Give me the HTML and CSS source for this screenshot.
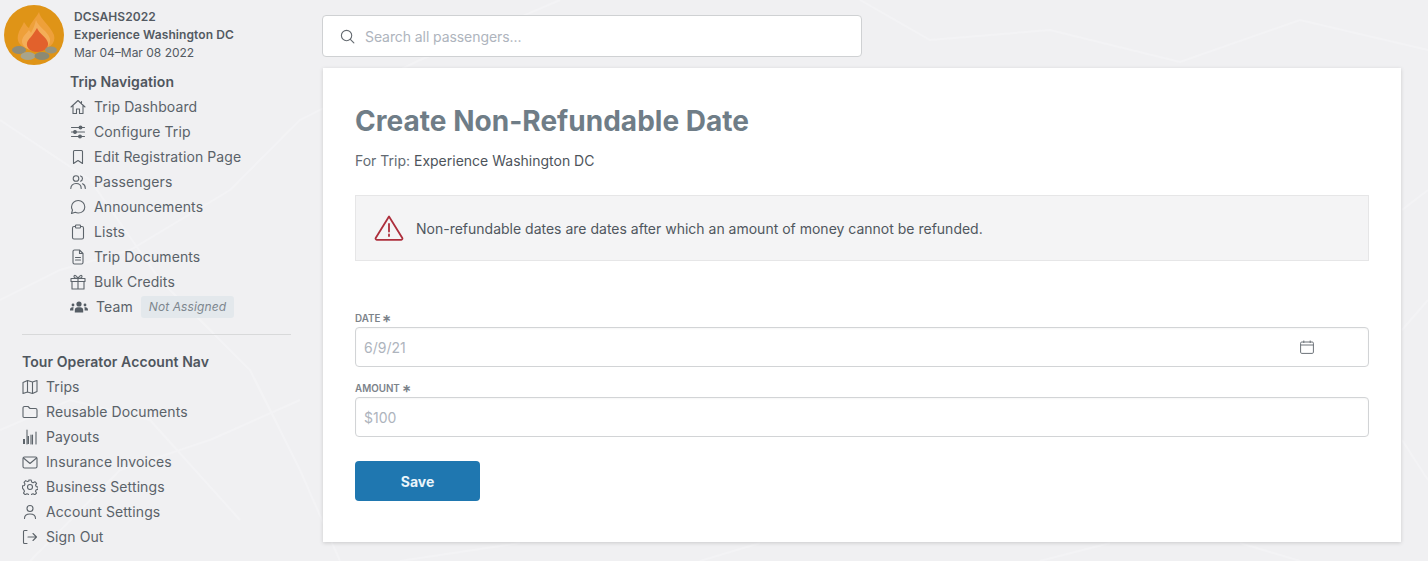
FILE: index.html
```html
<!DOCTYPE html>
<html lang="en">
<head>
<meta charset="utf-8">
<title>Create Non-Refundable Date</title>
<link rel="stylesheet" href="styles.css">
</head>
<body>
<svg class="map" width="1428" height="561" viewBox="0 0 1428 561" fill="none" stroke="#f3f3f5" stroke-width="2" aria-hidden="true">
  <path d="M0 300 60 270 130 250 230 190 300 120 420 60 560 0"/>
  <path d="M0 120 90 180 160 280 250 370 300 470 340 561"/>
  <path d="M860 0 930 40 1050 30 1180 62 1300 20 1428 50"/>
  <path d="M1402 210 1428 190M1402 330 1428 300M1402 440 1428 480"/>
  <path d="M30 561 120 470 210 440 300 400"/>
  <path d="M1040 561 1110 543M1240 543 1300 561"/>
  <path d="M400 561 520 543M700 561 760 543"/>
  <path d="M0 430 70 400 150 420 240 520"/>
</svg>
<div class="app">
  <aside class="sidebar">
    <header class="trip">
      <svg class="avatar" viewBox="0 0 60 60" aria-hidden="true">
        <circle cx="30" cy="30" r="30" fill="#df9417"/>
        <path d="M35 7C36 14 46 20 50 30 52 38 46 45 32 45 20 45 12 39 14 30 15 25 18 22 20 17 22 20 23 22 25 23 27 17 32 13 35 7z" fill="#eea03a"/>
        <path d="M32 15C34 22 44 26 46 34 47 41 40 46 32 46 24 46 17 41 18 35 19 31 22 29 25 25L27 28C29 24 31 20 32 15z" fill="#f4ae58"/>
        <path d="M33 23C35 29 43 32 44 38 45 43 39 47 33 47 27 47 22 43 23 38 24 34 28 32 33 23z" fill="#e2612c"/>
        <ellipse cx="15" cy="45" rx="7" ry="4" fill="#8f8c79"/>
        <ellipse cx="24" cy="51" rx="7.500" ry="4" fill="#a8a48c"/>
        <ellipse cx="38" cy="51" rx="7.500" ry="4" fill="#8b8a74"/>
        <ellipse cx="47" cy="45" rx="6" ry="3.600" fill="#98947c"/>
      </svg>
      <div class="trip-text">
        <div class="trip-strong">DCSAHS2022</div>
        <div class="trip-strong">Experience Washington DC</div>
        <div>Mar 04–Mar 08 2022</div>
      </div>
    </header>

    <nav class="nav nav-trip">
      <h2 class="nav-title">Trip Navigation</h2>
      <a class="nav-item"><svg class="ico" viewBox="0 0 16 16"><path d="M1 8 8 1.500 15 8M3 6.500V14.500h3.500V10h3v4.500H13V6.500M11.500 2.500v2.500"/></svg>Trip Dashboard</a>
      <a class="nav-item"><svg class="ico" viewBox="0 0 16 16"><path d="M1.500 3.500h13M1.500 8h13M1.500 12.500h13"/><circle class="dot" cx="10.500" cy="3.500" r="1.400"/><circle class="dot" cx="5" cy="8" r="1.400"/><circle class="dot" cx="10" cy="12.500" r="1.400"/></svg>Configure Trip</a>
      <a class="nav-item"><svg class="ico" viewBox="0 0 16 16"><path d="M3.500 2.500a1 1 0 0 1 1-1h7a1 1 0 0 1 1 1v12L8 11.500l-4.500 3z"/></svg>Edit Registration Page</a>
      <a class="nav-item"><svg class="ico" viewBox="0 0 16 16"><circle cx="6" cy="4.500" r="2.800"/><path d="M.8 14.500c0-3 2.200-5 5.200-5s5.200 2 5.200 5M10.500 2a2.700 2.700 0 0 1 0 5.200M12.500 9.800c1.700.6 2.800 2.300 2.800 4.700"/></svg>Passengers</a>
      <a class="nav-item"><svg class="ico" viewBox="0 0 16 16"><path d="M2.500 11C1.800 10 1.500 9 1.500 8c0-3.500 3-6.500 6.700-6.500S14.800 4.500 14.800 8 11.900 14 8.200 14c-1.100 0-2-.2-2.900-.7l-3.800 1.200z"/></svg>Announcements</a>
      <a class="nav-item"><svg class="ico" viewBox="0 0 16 16"><path d="M5.500 2.500H4a1.500 1.500 0 0 0-1.500 1.500v9.500A1.500 1.500 0 0 0 4 15h8a1.500 1.500 0 0 0 1.500-1.500V4A1.500 1.500 0 0 0 12 2.500h-1.500"/><rect x="5.500" y="1" width="5" height="3" rx=".8"/></svg>Lists</a>
      <a class="nav-item"><svg class="ico" viewBox="0 0 16 16"><path d="M9.500 1H4.500A1.500 1.500 0 0 0 3 2.500v11A1.500 1.500 0 0 0 4.500 15h7a1.500 1.500 0 0 0 1.500-1.500V4.500zM9.500 1v3.500H13M5.500 8.500h5M5.500 11h5"/></svg>Trip Documents</a>
      <a class="nav-item"><svg class="ico" viewBox="0 0 16 16"><path d="M1 4.500h14v3H1zM2 7.500v7.500h12V7.500M8 4.500V15M8 4.500C6 4.500 4 4 4 2.500S6 .5 8 4.500zM8 4.500c2 0 4-.5 4-2S10 .5 8 4.500z"/></svg>Bulk Credits</a>
      <a class="nav-item nav-team">
        <svg class="ico-team" viewBox="0 0 18 12"><circle cx="9" cy="3" r="2.600"/><path d="M4.800 11.500V9c0-1.800 1.400-2.800 3-2.800h2.400c1.600 0 3 1 3 2.800v2.500z"/><circle cx="3" cy="4" r="1.400"/><circle cx="15" cy="4" r="1.400"/><path d="M0 9c0-1.800 1-2.800 2.400-2.800h1.300C3.200 7 3.400 8 3.400 9.500H0zM18 9c0-1.800-1-2.800-2.400-2.800h-1.300c.5.800.3 1.800.3 3.300H18z"/></svg>
        <span>Team</span><span class="badge">Not Assigned</span>
      </a>
    </nav>

    <hr class="divider">

    <nav class="nav nav-account">
      <h2 class="nav-title">Tour Operator Account Nav</h2>
      <a class="nav-item"><svg class="ico" viewBox="0 0 16 16"><path d="M1 3.500 5.500 1.500 10.500 3 15 1.500V12.500L10.500 14.500 5.500 13 1 14.500zM5.500 1.500V13M10.500 3V14.500"/></svg>Trips</a>
      <a class="nav-item"><svg class="ico" viewBox="0 0 16 16"><path d="M1 4a1.500 1.500 0 0 1 1.500-1.500h3.500L8 4.500h5.500A1.500 1.500 0 0 1 15 6v6.500a1 1 0 0 1-1 1H2a1 1 0 0 1-1-1z"/></svg>Reusable Documents</a>
      <a class="nav-item"><svg class="ico ico-bars" viewBox="0 0 16 16"><path class="fill" d="M1 10h2v5H1zM5.500 7h1.500v8H5.500z"/><path d="M5 1v14M9 6v9M10.500 6v9M14 3v12"/></svg>Payouts</a>
      <a class="nav-item"><svg class="ico" viewBox="0 0 16 16"><rect x="1" y="3" width="14" height="11" rx="1.500"/><path d="M1.500 4 8 9.500 14.500 4"/></svg>Insurance Invoices</a>
      <a class="nav-item"><svg class="ico" viewBox="0 0 16 16"><circle cx="8" cy="8" r="2.500"/><path d="M6.800 1h2.400l.4 2 1.500.7 1.800-1 1.700 1.700-1.100 1.700.7 1.500 1.800.4v2.400l-1.800.4-.7 1.500 1 1.800-1.700 1.600-1.700-1-1.500.6-.4 2H6.800l-.4-2-1.500-.6-1.700 1-1.700-1.600 1-1.800-.7-1.500L.5 9.100V6.900l1.800-.4.7-1.500-1-1.700 1.700-1.700 1.700 1 1.500-.7z"/></svg>Business Settings</a>
      <a class="nav-item"><svg class="ico" viewBox="0 0 16 16"><circle cx="8" cy="4.500" r="3"/><path d="M2.500 14.500c0-2.800 2.400-4.500 5.500-4.500s5.500 1.700 5.500 4.500"/></svg>Account Settings</a>
      <a class="nav-item"><svg class="ico" viewBox="0 0 16 16"><path d="M5 1.500H2.500a1 1 0 0 0-1 1v11a1 1 0 0 0 1 1H5M6 8h8.500M11 4.500 14.500 8 11 11.500"/></svg>Sign Out</a>
    </nav>
  </aside>

  <main class="main">
    <div class="search">
      <svg class="search-ico" viewBox="0 0 16 16"><circle cx="7" cy="7" r="5.500"/><path d="M11 11l3.800 3.800"/></svg>
      <span>Search all passengers...</span>
    </div>
    <section class="card">
      <h1 class="title">Create Non-Refundable Date</h1>
      <p class="subtitle">For Trip: <span class="subtitle-trip">Experience Washington DC</span></p>
      <div class="alert">
        <svg class="alert-ico" viewBox="0 0 30 26"><path d="M15 1.500 1.700 23a1.200 1.200 0 0 0 1 1.800h24.600a1.200 1.200 0 0 0 1-1.800z"/><path d="M15 9v7.500M15 19.500v1.500"/></svg>
        <span>Non-refundable dates are dates after which an amount of money cannot be refunded.</span>
      </div>
      <form class="form">
        <div class="field">
          <label class="label">DATE<span class="star">∗</span></label>
          <div class="input"><span>6/9/21</span>
            <svg class="cal" viewBox="0 0 14 14"><rect x=".6" y="2" width="12.800" height="11.400" rx="1.200"/><path d="M.6 5h12.800M3.800.5v2.500M10.200.5v2.500"/></svg>
          </div>
        </div>
        <div class="field">
          <label class="label">AMOUNT<span class="star">∗</span></label>
          <div class="input"><span>$100</span></div>
        </div>
        <button class="save" type="button">Save</button>
      </form>
    </section>
  </main>
</div>
</body>
</html>
```

FILE: styles.css
```css
* { box-sizing: border-box; }

html, body {
  margin: 0;
  height: 561px;
  overflow: hidden;
}

body {
  position: relative;
  background: #f0f0f2;
  color: #5a6269;
  font-family: Inter, "Liberation Sans", sans-serif;
  font-size: 14px;
}

.map {
  position: absolute;
  left: 0;
  top: 0;
}

.app {
  position: relative;
  display: flex;
  height: 561px;
}

.sidebar {
  width: 322px;
  flex: none;
  padding-top: 5px;
}

.trip {
  display: flex;
  gap: 10px;
  padding-left: 4px;
  height: 64px;
}

.avatar {
  width: 60px;
  height: 60px;
  flex: none;
}

.trip-text {
  padding-top: 3px;
  font-size: 12px;
  line-height: 18px;
  color: #535a62;
}

.trip-strong {
  font-weight: 600;
  letter-spacing: .08px;
}

.nav-title {
  margin: 0;
  height: 25px;
  font-size: 14px;
  line-height: 25px;
  font-weight: 600;
  letter-spacing: .08px;
  color: #4f565e;
}

.nav-trip {
  padding-left: 70px;
}

.nav-account {
  padding-left: 22px;
}

.nav-item {
  display: flex;
  align-items: center;
  gap: 8px;
  height: 25px;
  font-size: 14px;
  line-height: 25px;
  letter-spacing: .1px;
}

.ico {
  width: 16px;
  height: 16px;
  flex: none;
  fill: none;
  stroke: #5d646b;
  stroke-width: 1.100;
  stroke-linecap: round;
  stroke-linejoin: round;
}

.ico .dot {
  fill: #5d646b;
}

.ico-bars .fill {
  fill: #5d646b;
  stroke: none;
}

.ico-team {
  width: 18px;
  height: 12px;
  flex: none;
  fill: #555d65;
}

.badge {
  padding: 0 8px;
  height: 22px;
  line-height: 22px;
  border-radius: 3px;
  background: #e3e8ec;
  color: #7d868e;
  font-size: 12px;
  font-style: italic;
}

.divider {
  margin: 15px 31px 14px 22px;
  border: 0;
  border-top: 1px solid #d8d9da;
}

.main {
  width: 1079px;
  flex: none;
  padding-top: 15px;
}

.search {
  display: flex;
  align-items: center;
  gap: 10px;
  width: 540px;
  height: 42px;
  margin-bottom: 11px;
  padding-left: 17px;
  background: #fff;
  border: 1px solid #cfd1d3;
  border-radius: 4px;
  color: #aeb4bd;
  font-size: 14px;
  letter-spacing: -.08px;
}

.search-ico {
  width: 15px;
  height: 15px;
  fill: none;
  stroke: #656b71;
  stroke-width: 1.200;
  stroke-linecap: round;
}

.card {
  margin-left: 1px;
  width: 1078px;
  height: 474px;
  padding: 33px 32px 0;
  background: #fff;
  box-shadow: 0 1px 4px rgba(0, 0, 0, .16);
}

.title {
  margin: 0;
  height: 40px;
  font-size: 28px;
  line-height: 40px;
  font-weight: 700;
  letter-spacing: .03px;
  color: #6f7d87;
}

.subtitle {
  margin: 10px 0 0;
  height: 20px;
  line-height: 20px;
  font-size: 14px;
  color: #626a72;
}

.subtitle-trip {
  color: #4d545b;
}

.alert {
  display: flex;
  align-items: center;
  gap: 12px;
  height: 66px;
  margin-top: 24px;
  padding-left: 18px;
  background: #f4f4f5;
  border: 1px solid #e6e6e7;
  color: #50575e;
  font-size: 14px;
}

.alert-ico {
  width: 30px;
  height: 26px;
  fill: none;
  stroke: #ad2f3c;
  stroke-width: 1.800;
  stroke-linecap: round;
  stroke-linejoin: round;
}

.form {
  padding-top: 50px;
}

.field {
  margin-bottom: 14px;
}

.label {
  display: block;
  height: 16px;
  font-size: 9.800px;
  line-height: 14px;
  font-weight: 600;
  color: #7c838a;
}

.star {
  margin-left: 2px;
  font-size: 11px;
  font-weight: 700;
}

.input {
  position: relative;
  display: flex;
  align-items: center;
  height: 40px;
  padding-left: 8px;
  border: 1px solid #d2d4d6;
  border-radius: 4px;
  color: #aeb4bd;
  font-size: 14px;
  box-shadow: inset 0 1px 2px rgba(0, 0, 0, .04);
}

.cal {
  position: absolute;
  right: 54px;
  top: 12px;
  width: 14px;
  height: 14px;
  fill: none;
  stroke: #6c7278;
  stroke-width: 1;
}

.save {
  display: block;
  width: 125px;
  height: 40px;
  margin-top: 24px;
  border: 0;
  border-radius: 4px;
  background: #1f77b0;
  color: #eaf5fb;
  font-family: inherit;
  font-size: 14px;
  font-weight: 700;
}
```
